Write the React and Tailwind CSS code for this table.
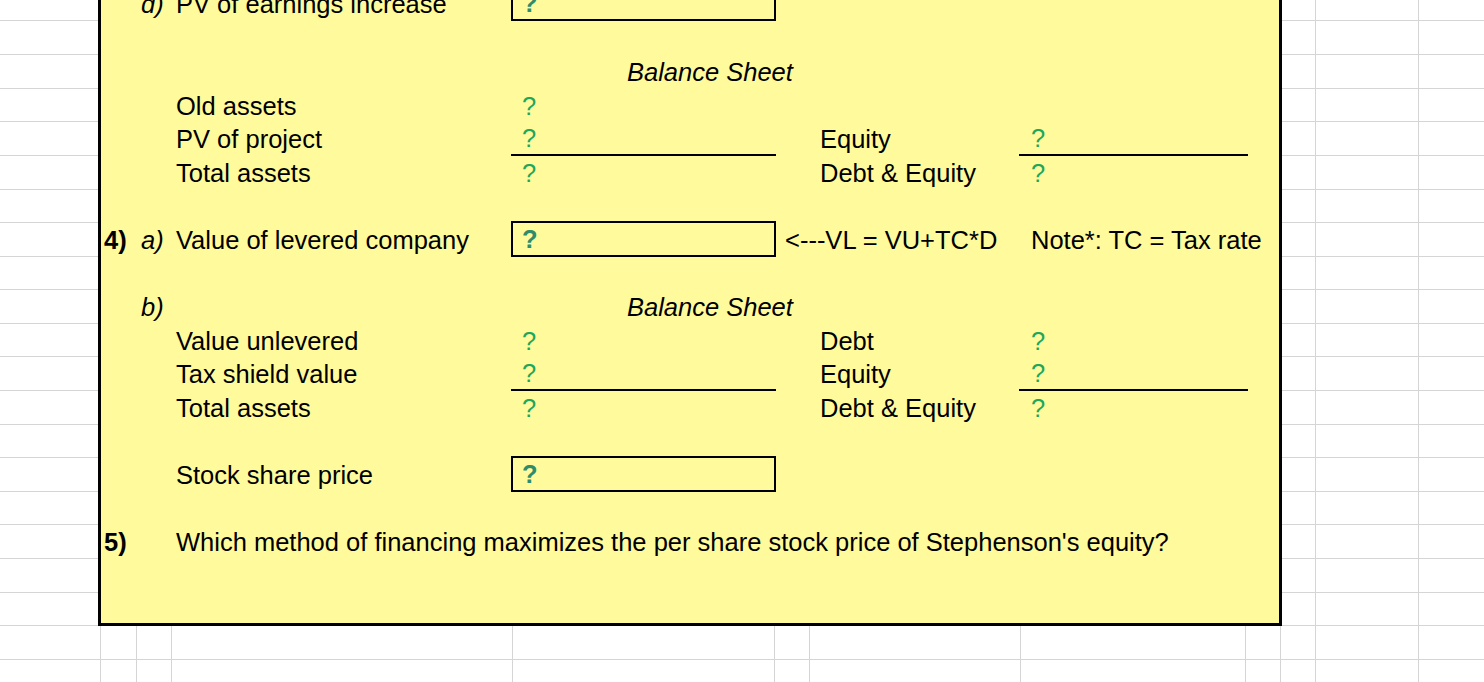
import React from "react";

const H = { 34: "h-[34px]", 33: "h-[33px]", 23: "h-[23px]" };
const ROWS = [34, 34, 34, 33, 34, 34, 33, 34, 33, 34, 33, 34, 34, 33, 34, 33, 34, 34, 33];
const GRID = "border-[#d5d5d5]";

function C({ w, className = "", children }) {
  return (
    <div className={`${w} shrink-0 flex items-center whitespace-nowrap ${className}`}>
      {children}
    </div>
  );
}

function Q({ bold }) {
  return bold ? (
    <span className="font-bold text-[#2c8c6c]">?</span>
  ) : (
    <span className="text-[#1ea75a]">?</span>
  );
}

function BoxCell() {
  return (
    <div className="w-[262px] shrink-0 flex flex-col">
      <div className="flex-1 -mt-[2px] -ml-[2px] -mr-[1px] border-2 border-black flex items-center pl-[9px]">
        <Q bold />
      </div>
    </div>
  );
}

function UnderD({ children }) {
  return (
    <div className="w-[262px] shrink-0 flex flex-col">
      <div className="flex-1 -ml-[2px] -mr-[1px] border-b-2 border-black flex items-center pl-[11px]">
        {children}
      </div>
    </div>
  );
}

function UnderG({ children }) {
  return (
    <div className="w-[225px] shrink-0 flex flex-col">
      <div className="flex-1 -ml-[2px] -mr-[2px] border-b-2 border-black flex items-center pl-[12px]">
        {children}
      </div>
    </div>
  );
}

function Row({ h, a, b, c, d, e, f, g }) {
  return (
    <div className={`${H[h]} shrink-0 flex`}>
      <C w="w-[36px]" className="pl-[3px] font-bold">{a}</C>
      <C w="w-[35px]" className="pl-[4px] italic">{b}</C>
      <C w="w-[341px]" className="pl-[4px]">{c}</C>
      {d === undefined ? <C w="w-[262px]" /> : d}
      <C w="w-[35px]" className="pl-[10px]">{e}</C>
      <C w="w-[211px]" className="pl-[10px]">{f}</C>
      {g === undefined ? <C w="w-[225px]" /> : g}
      <div className="flex-1" />
    </div>
  );
}

function DQ() {
  return (
    <C w="w-[262px]" className="pl-[9px]">
      <Q />
    </C>
  );
}
function GQ() {
  return (
    <C w="w-[225px]" className="pl-[10px]">
      <Q />
    </C>
  );
}
function Title() {
  return (
    <C w="w-[262px]" className="pl-[114px] italic">
      Balance Sheet
    </C>
  );
}

export default function App() {
  return (
    <div className="w-[1484px] h-[682px] overflow-hidden bg-white text-black font-['Liberation_Sans',Arial,sans-serif] text-[25.5px] leading-[28px]">
      <div className="-mt-[13px] flex flex-col">
        {/* upper part */}
        <div className="flex h-[639px]">
          {/* left gutter */}
          <div className="w-[98px] shrink-0 flex flex-col">
            {ROWS.map((h, i) => (
              <div key={i} className={`${H[h]} shrink-0 border-b ${GRID}`} />
            ))}
          </div>
          {/* yellow box */}
          <div className="w-[1184px] shrink-0 h-[639px] bg-[#fffb9c] border-l-[3px] border-r-[3px] border-b-[3px] border-black flex flex-col overflow-hidden">
            <Row h={34} b="d)" c="PV of earnings increase" d={<BoxCell />} />
            <Row h={34} />
            <Row h={34} d={<Title />} />
            <Row h={33} c="Old assets" d={<DQ />} />
            <Row
              h={34}
              c="PV of project"
              d={
                <UnderD>
                  <Q />
                </UnderD>
              }
              f="Equity"
              g={
                <UnderG>
                  <Q />
                </UnderG>
              }
            />
            <Row h={34} c="Total assets" d={<DQ />} f="Debt & Equity" g={<GQ />} />
            <Row h={33} />
            <Row
              h={34}
              a="4)"
              b="a)"
              c="Value of levered company"
              d={<BoxCell />}
              e="<---VL = VU+TC*D"
              g={
                <C w="w-[225px]" className="pl-[10px]">
                  Note*: TC = Tax rate
                </C>
              }
            />
            <Row h={33} />
            <Row h={34} b="b)" d={<Title />} />
            <Row h={33} c="Value unlevered" d={<DQ />} f="Debt" g={<GQ />} />
            <Row
              h={34}
              c="Tax shield value"
              d={
                <UnderD>
                  <Q />
                </UnderD>
              }
              f="Equity"
              g={
                <UnderG>
                  <Q />
                </UnderG>
              }
            />
            <Row h={34} c="Total assets" d={<DQ />} f="Debt & Equity" g={<GQ />} />
            <Row h={33} />
            <Row h={34} c="Stock share price" d={<BoxCell />} />
            <Row h={33} />
            <Row
              h={34}
              a="5)"
              c="Which method of financing maximizes the per share stock price of Stephenson's equity?"
            />
          </div>
          {/* right grid */}
          <div className="flex-1 flex flex-col">
            {ROWS.map((h, i) => (
              <div key={i} className={`${H[h]} shrink-0 flex border-b ${GRID}`}>
                <div className={`w-[34px] shrink-0 border-r ${GRID}`} />
                <div className={`w-[103px] shrink-0 border-r ${GRID}`} />
                <div className="flex-1" />
              </div>
            ))}
          </div>
        </div>
        {/* lower grid */}
        {[34, 23].map((h, i) => (
          <div key={i} className={`${H[h]} shrink-0 flex ${i === 0 ? "border-b" : ""} ${GRID}`}>
            <div className={`w-[101px] shrink-0 border-r ${GRID}`} />
            <div className={`w-[36px] shrink-0 border-r ${GRID}`} />
            <div className={`w-[35px] shrink-0 border-r ${GRID}`} />
            <div className={`w-[341px] shrink-0 border-r ${GRID}`} />
            <div className={`w-[262px] shrink-0 border-r ${GRID}`} />
            <div className={`w-[35px] shrink-0 border-r ${GRID}`} />
            <div className={`w-[211px] shrink-0 border-r ${GRID}`} />
            <div className={`w-[225px] shrink-0 border-r ${GRID}`} />
            <div className={`w-[35px] shrink-0 border-r ${GRID}`} />
            <div className={`w-[35px] shrink-0 border-r ${GRID}`} />
            <div className={`w-[103px] shrink-0 border-r ${GRID}`} />
            <div className="flex-1" />
          </div>
        ))}
      </div>
    </div>
  );
}
